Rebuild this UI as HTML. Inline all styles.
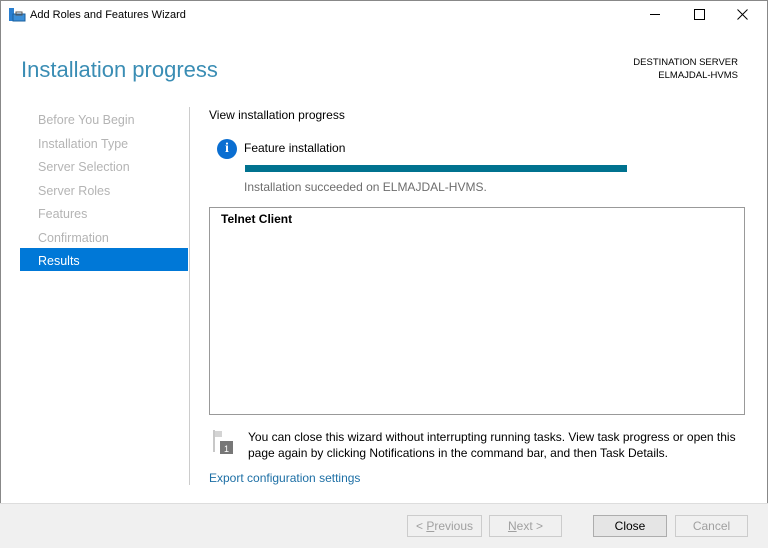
<!DOCTYPE html>
<html><head><meta charset="utf-8"><style>
body{margin:0;width:768px;height:547px;overflow:hidden;background:#fff;font-family:"Liberation Sans",sans-serif;font-size:12px;color:#000;position:relative}
.a{position:absolute;white-space:nowrap}
.nav{color:#b4b4b4;font-size:12.5px}
.btn{position:absolute;top:515px;height:20px;border:1px solid #adadad;background:#e5e5e5;text-align:center;line-height:20px;font-size:12px}
</style></head><body>
<div class="a" style="left:0;top:0;width:766px;height:545px;border:1px solid #888;"></div>
<svg class="a" style="left:8px;top:6px" width="18" height="18" viewBox="0 0 18 18"><rect x="1" y="2" width="5" height="13" fill="#2a7fd0"/><rect x="5" y="8" width="12" height="7" fill="#3c8fd8" stroke="#1a5f9e"/><rect x="8" y="6" width="6" height="3" fill="none" stroke="#555"/></svg>
<div class="a" style="left:30px;top:9px;font-size:11px">Add Roles and Features Wizard</div>
<div class="a" style="left:650px;top:14px;width:10px;height:1px;background:#000"></div>
<div class="a" style="left:694px;top:9px;width:9px;height:9px;border:1px solid #000"></div>
<svg class="a" style="left:737px;top:9px" width="11" height="11"><path d="M0.5 0.5L10.5 10.5M10.5 0.5L0.5 10.5" stroke="#000" stroke-width="1"/></svg>
<div class="a" style="left:21px;top:57px;font-size:22px;color:#3a8db4">Installation progress</div>
<div class="a" style="right:30px;top:56px;font-size:9.5px;text-align:right;line-height:13px">DESTINATION SERVER<br>ELMAJDAL-HVMS</div>
<div class="a nav" style="left:38px;top:113px">Before You Begin</div>
<div class="a nav" style="left:38px;top:137px">Installation Type</div>
<div class="a nav" style="left:38px;top:160px">Server Selection</div>
<div class="a nav" style="left:38px;top:184px">Server Roles</div>
<div class="a nav" style="left:38px;top:207px">Features</div>
<div class="a nav" style="left:38px;top:231px">Confirmation</div>
<div class="a" style="left:20px;top:248px;width:168px;height:23px;background:#0078d7"></div>
<div class="a" style="left:38px;top:254px;color:#fff;font-size:12.5px">Results</div>
<div class="a" style="left:189px;top:107px;width:1px;height:378px;background:#ccc"></div>
<div class="a" style="left:209px;top:108px">View installation progress</div>
<div class="a" style="left:217px;top:139px;width:20px;height:20px;border-radius:50%;background:#0a6ed1;color:#fff;font-weight:bold;text-align:center;line-height:20px;font-size:14px;font-family:'Liberation Serif',serif">i</div>
<div class="a" style="left:244px;top:141px">Feature installation</div>
<div class="a" style="left:245px;top:165px;width:382px;height:7px;background:#00728f"></div>
<div class="a" style="left:244px;top:180px;color:#6d6d6d">Installation succeeded on ELMAJDAL-HVMS.</div>
<div class="a" style="left:209px;top:207px;width:534px;height:206px;border:1px solid #999"></div>
<div class="a" style="left:221px;top:212px;font-weight:bold">Telnet Client</div>
<svg class="a" style="left:212px;top:430px" width="24" height="26"><rect x="1" y="0" width="2" height="22" fill="#c8c8c8"/><path d="M3 1h7v6H3z" fill="#d4d4d4"/><rect x="8" y="11" width="13" height="13" fill="#777"/><text x="12" y="22" font-size="9" fill="#fff" font-family="Liberation Sans">1</text></svg>
<div class="a" style="left:248px;top:430px;line-height:15.5px">You can close this wizard without interrupting running tasks. View task progress or open this<br>page again by clicking Notifications in the command bar, and then Task Details.</div>
<div class="a" style="left:209px;top:471px;color:#1d6fa5">Export configuration settings</div>
<div class="a" style="left:0;top:503px;width:768px;height:44px;background:#f0f0f0;border-top:1px solid #ddd"></div>
<div class="btn" style="left:407px;width:73px;color:#a0a0a0;background:#f0f0f0;border-color:#ccc">&lt; <u>P</u>revious</div>
<div class="btn" style="left:489px;width:71px;color:#a0a0a0;background:#f0f0f0;border-color:#ccc"><u>N</u>ext &gt;</div>
<div class="btn" style="left:593px;width:72px">Close</div>
<div class="btn" style="left:675px;width:71px;color:#a0a0a0;background:#f0f0f0;border-color:#ccc">Cancel</div>
</body></html>
